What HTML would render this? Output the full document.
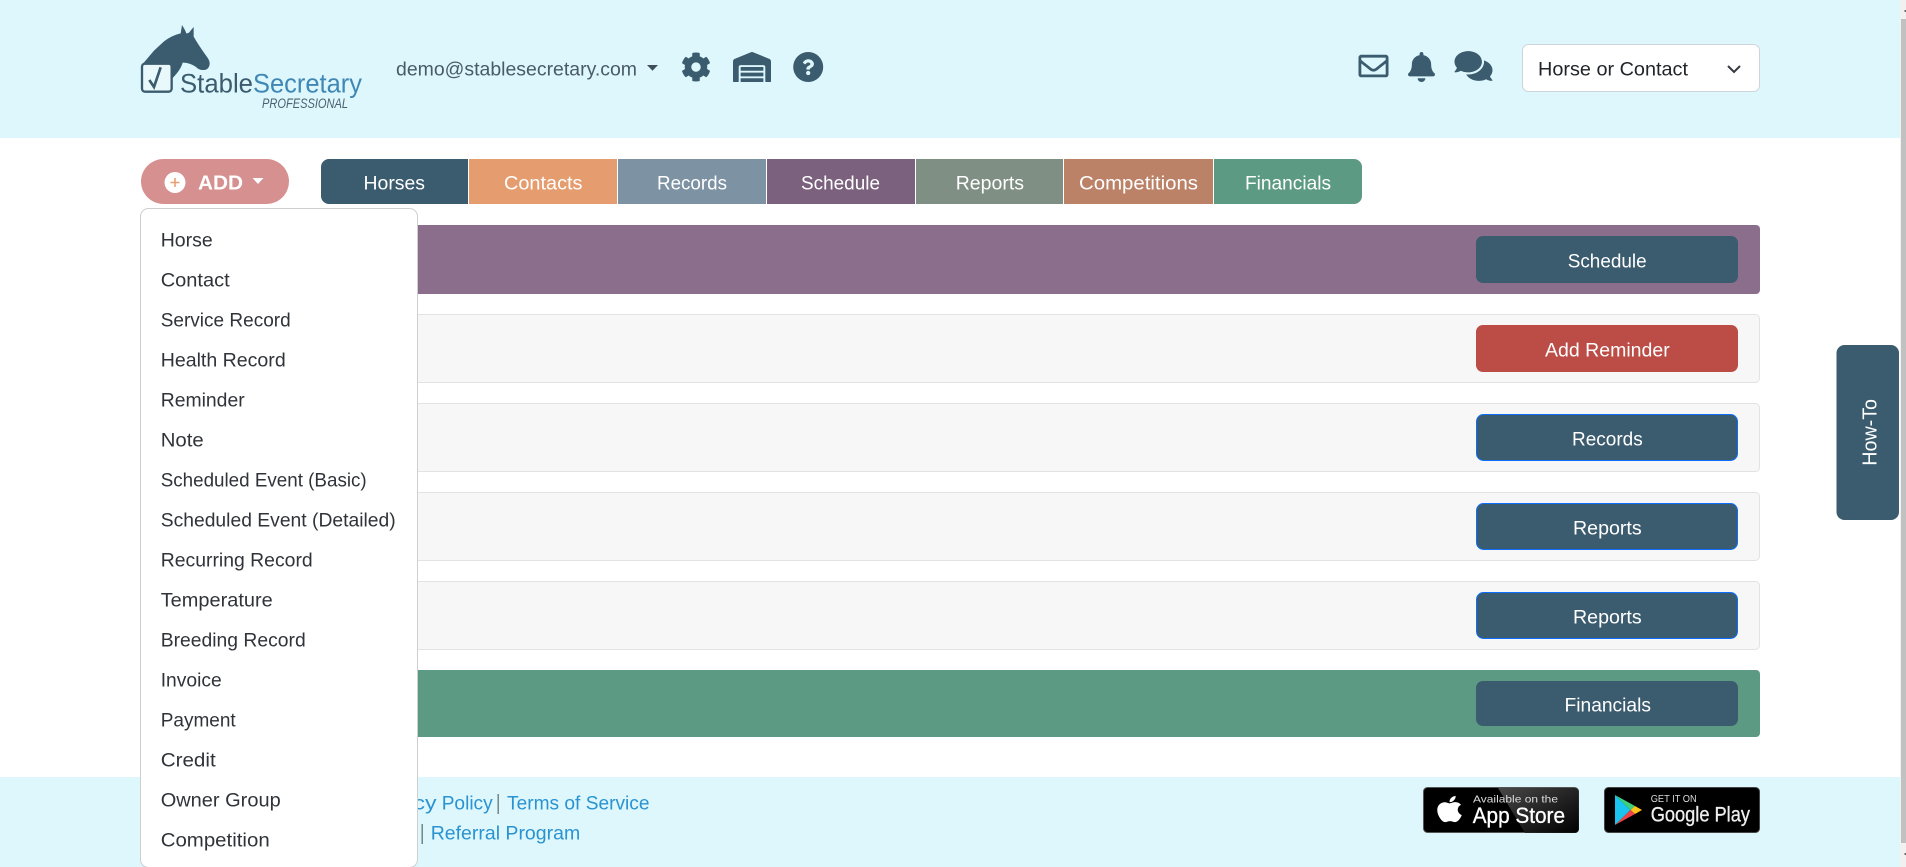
<!DOCTYPE html>
<html lang="en">
<head>
<meta charset="utf-8">
<title>Stable Secretary</title>
<style>
html,body{margin:0;padding:0;width:1906px;height:867px;overflow:hidden;background:#fff}
svg{display:block;position:absolute;left:0;top:0}
text{font-family:"Liberation Sans",sans-serif;white-space:pre}
.d text{font-size:19.5px;fill:#30343a}
.t text{font-size:19.5px;fill:#fff}
.b text{font-size:19.5px;fill:#fff}
.f text{font-size:19.5px;fill:#2a93d0}
</style>
</head>
<body>
<svg width="1906" height="867" viewBox="0 0 1906 867" xmlns="http://www.w3.org/2000/svg">
<defs>
<linearGradient id="sheen" x1="0" y1="0" x2="1" y2="1"><stop offset="0" stop-color="#555"/><stop offset="1" stop-color="#000"/></linearGradient>
</defs>
<!-- backgrounds -->
<rect x="0" y="0" width="1906" height="867" fill="#fff"/>
<rect x="0" y="0" width="1900" height="138" fill="#ddf7fc"/>
<rect x="0" y="777" width="1900" height="90" fill="#ddf7fc"/>

<!-- logo -->
<g transform="translate(130,20) scale(.3333)">
<path fill="#3b5b6e" d="M38 132L72 92L102 64C118 52 134 44 152 40L156 15C160 22 166 30 169 40C174 40 178 38 180 34L191 21L191 50C200 66 212 84 226 104C232 112 240 122 239 132C238 142 232 150 222 150C212 151 205 148 198 141C186 133 172 128 158 128C154 142 146 156 126 176L126 132Z"/>
<rect x="36" y="131" width="89" height="84" rx="9" fill="#e9f9fb" stroke="#3b5b6e" stroke-width="7"/>
<path d="M58 180L72 201L92 142" fill="none" stroke="#3b5b6e" stroke-width="8"/>
</g>
<text x="180" y="92.7" font-size="26.5" fill="#3b5b6e" textLength="73" lengthAdjust="spacingAndGlyphs">Stable</text>
<text x="253" y="92.7" font-size="26.5" fill="#3f88b5" textLength="109" lengthAdjust="spacingAndGlyphs">Secretary</text>
<text x="262" y="108" font-size="14" font-style="italic" fill="#4a6070" textLength="86" lengthAdjust="spacingAndGlyphs">PROFESSIONAL</text>

<!-- header left -->
<text x="396" y="75.7" font-size="19.5" fill="#4a5b66" textLength="241" lengthAdjust="spacingAndGlyphs">demo@stablesecretary.com</text>
<path d="M647 65H658L652.5 70.7Z" fill="#3f4f5a"/>
<svg x="681" y="52" width="30" height="30" viewBox="0 0 512 512"><path fill="#3b5b6e" d="M487.4 315.7l-42.6-24.6c4.3-23.2 4.3-47 0-70.2l42.6-24.6c4.9-2.8 7.1-8.6 5.5-14-11.1-35.6-30-67.8-54.7-94.6-3.8-4.1-10-5.1-14.8-2.3L380.8 110c-17.9-15.4-38.5-27.3-60.8-35.1V25.8c0-5.6-3.9-10.5-9.4-11.7-36.7-8.2-74.3-7.8-109.2 0-5.5 1.2-9.4 6.1-9.4 11.7V75c-22.2 7.9-42.8 19.8-60.8 35.1L88.7 85.5c-4.9-2.8-11-1.9-14.8 2.3-24.7 26.7-43.6 58.9-54.7 94.6-1.7 5.4.6 11.2 5.5 14L67.3 221c-4.3 23.2-4.3 47 0 70.2l-42.6 24.6c-4.9 2.8-7.1 8.6-5.5 14 11.1 35.6 30 67.8 54.7 94.6 3.8 4.1 10 5.1 14.8 2.3l42.6-24.6c17.9 15.4 38.5 27.3 60.8 35.1v49.2c0 5.6 3.9 10.5 9.4 11.7 36.7 8.2 74.3 7.8 109.2 0 5.5-1.2 9.4-6.1 9.4-11.7v-49.2c22.2-7.9 42.8-19.8 60.8-35.1l42.6 24.6c4.9 2.8 11 1.9 14.8-2.3 24.7-26.7 43.6-58.9 54.7-94.6 1.5-5.5-.7-11.3-5.6-14.1zM256 336c-44.1 0-80-35.9-80-80s35.9-80 80-80 80 35.9 80 80-35.9 80-80 80z"/></svg>
<svg x="733" y="52" width="38" height="30" viewBox="0 0 640 512" preserveAspectRatio="none"><path fill="#3b5b6e" d="M504 352H136.4c-4.4 0-8 3.6-8 8l-.1 48c0 4.4 3.6 8 8 8H504c4.4 0 8-3.6 8-8v-48c0-4.4-3.6-8-8-8zm0 96H136.1c-4.4 0-8 3.6-8 8l-.1 48c0 4.4 3.6 8 8 8h368c4.4 0 8-3.6 8-8v-48c0-4.4-3.6-8-8-8zm0-192H136.6c-4.4 0-8 3.6-8 8l-.1 48c0 4.4 3.6 8 8 8H504c4.4 0 8-3.6 8-8v-48c0-4.4-3.6-8-8-8zm106.5-139L338.4 3.7a48.15 48.15 0 0 0-36.9 0L29.5 117C11.7 124.5 0 141.9 0 161.3V504c0 4.4 3.6 8 8 8h80c4.4 0 8-3.6 8-8V256c0-17.6 14.6-32 32.6-32h382.8c18 0 32.6 14.4 32.6 32v248c0 4.4 3.6 8 8 8h80c4.4 0 8-3.6 8-8V161.3c0-19.4-11.7-36.8-29.5-44.3z"/></svg>
<circle cx="808.2" cy="67" r="15" fill="#3b5b6e"/>
<g transform="translate(808.2,67) scale(.0465) translate(-256,-256)"><path fill="#ddf7fc" d="M262.655 90c-54.497 0-89.255 22.957-116.549 63.758-3.536 5.286-2.353 12.415 2.715 16.258l34.699 26.31c5.205 3.947 12.621 3.008 16.665-2.122 17.864-22.658 30.113-35.797 57.303-35.797 20.429 0 45.698 13.148 45.698 32.958 0 14.976-12.363 22.667-32.534 33.976C247.128 238.528 216 254.941 216 296v4c0 6.627 5.373 12 12 12h56c6.627 0 12-5.373 12-12v-1.333c0-28.462 83.186-29.647 83.186-106.667 0-58.002-60.165-102-116.531-102zM256 338c-25.365 0-46 20.635-46 46 0 25.364 20.635 46 46 46s46-20.636 46-46c0-25.365-20.635-46-46-46z"/></g>

<!-- header right -->
<svg x="1358.5" y="51" width="30" height="30" viewBox="0 0 512 512"><path fill="#3b5b6e" d="M464 64H48C21.49 64 0 85.49 0 112v288c0 26.51 21.49 48 48 48h416c26.51 0 48-21.49 48-48V112c0-26.51-21.49-48-48-48zm0 48v40.805c-22.422 18.259-58.168 46.651-134.587 106.49-16.841 13.247-50.201 45.072-73.413 44.701-23.208.375-56.579-31.459-73.413-44.701C106.18 199.465 70.425 171.067 48 152.805V112h416zM48 400V214.398c22.914 18.251 55.409 43.862 104.938 82.646 21.857 17.205 60.134 55.186 103.062 54.955 42.717.231 80.509-37.199 103.053-54.947 49.528-38.783 82.032-64.401 104.947-82.653V400H48z"/></svg>
<svg x="1408" y="52" width="27" height="30" viewBox="0 0 448 512" preserveAspectRatio="none"><path fill="#3b5b6e" d="M224 512c35.32 0 63.97-28.65 63.97-64H160.03c0 35.35 28.65 64 63.97 64zm215.39-149.71c-19.32-20.76-55.47-51.99-55.47-154.29 0-77.7-54.48-139.9-127.94-155.16V32c0-17.67-14.32-32-31.98-32s-31.98 14.33-31.98 32v20.84C118.56 68.1 64.08 130.3 64.08 208c0 102.3-36.15 133.53-55.47 154.29-6 6.45-8.66 14.16-8.61 21.71.11 16.4 12.98 32 32.1 32h383.8c19.12 0 32-15.6 32.1-32 .05-7.55-2.61-15.27-8.61-21.71z"/></svg>
<svg x="1454.5" y="49" width="38" height="34" viewBox="0 0 576 512" preserveAspectRatio="none"><path fill="#3b5b6e" d="M416 192c0-88.4-93.1-160-208-160S0 103.6 0 192c0 34.3 14.1 65.9 38 92-13.4 30.2-35.5 54.2-35.8 54.5-2.2 2.3-2.8 5.7-1.5 8.7S4.8 352 8 352c36.6 0 66.9-12.3 88.7-25 32.2 15.7 70.3 25 111.3 25 114.9 0 208-71.6 208-160zm122 220c23.9-26 38-57.7 38-92 0-66.9-53.5-124.2-129.3-148.1.9 6.6 1.3 13.3 1.3 20.1 0 105.9-107.7 192-240 192-10.8 0-21.3-.8-31.7-1.9C207.8 439.6 281.8 480 368 480c41 0 79.1-9.2 111.3-25 21.8 12.7 52.1 25 88.7 25 3.2 0 6.1-1.9 7.3-4.8 1.3-2.9.7-6.3-1.5-8.7-.3-.3-22.4-24.2-35.8-54.5z"/></svg>
<rect x="1522.5" y="44.5" width="237" height="47" rx="6" fill="#fff" stroke="#ced4da"/>
<text x="1538" y="75.7" font-size="19.5" fill="#212529" textLength="150" lengthAdjust="spacingAndGlyphs">Horse or Contact</text>
<path d="M1728 66L1734 72L1740 66" fill="none" stroke="#343a40" stroke-width="2"/>

<!-- add button -->
<rect x="141" y="159" width="148" height="45" rx="22.5" fill="#d69090"/>
<circle cx="175" cy="182.5" r="10.5" fill="#fff"/>
<path d="M175 178v9M170.5 182.5h9" stroke="#e8a070" stroke-width="1.6" fill="none"/>
<text x="198" y="189.5" font-size="20.5" font-weight="bold" fill="#fff" textLength="45" lengthAdjust="spacingAndGlyphs">ADD</text>
<path d="M252.5 178H263.5L258 184Z" fill="#fff"/>

<!-- tabs -->
<path d="M329 159H468V204H329a8 8 0 0 1-8-8V167a8 8 0 0 1 8-8Z" fill="#3b5b6e"/>
<rect x="469" y="159" width="148" height="45" fill="#e59d6f"/>
<rect x="618" y="159" width="148" height="45" fill="#7d92a3"/>
<rect x="767" y="159" width="148" height="45" fill="#7b617d"/>
<rect x="916" y="159" width="147" height="45" fill="#7f8f83"/>
<rect x="1064" y="159" width="149" height="45" fill="#bb8268"/>
<path d="M1214 159H1354a8 8 0 0 1 8 8V196a8 8 0 0 1-8 8H1214Z" fill="#5d9a84"/>
<g class="t" transform="translate(0,-.5)">
<text x="363.5" y="190" textLength="61.5" lengthAdjust="spacingAndGlyphs">Horses</text>
<text x="504" y="190" textLength="78.5" lengthAdjust="spacingAndGlyphs">Contacts</text>
<text x="657" y="190" textLength="70" lengthAdjust="spacingAndGlyphs">Records</text>
<text x="801" y="190" textLength="79" lengthAdjust="spacingAndGlyphs">Schedule</text>
<text x="955.7" y="190" textLength="68.3" lengthAdjust="spacingAndGlyphs">Reports</text>
<text x="1079" y="190" textLength="119" lengthAdjust="spacingAndGlyphs">Competitions</text>
<text x="1245" y="190" textLength="86" lengthAdjust="spacingAndGlyphs">Financials</text>
</g>

<!-- panels -->
<rect x="140" y="225" width="1620" height="69" rx="4" fill="#8a6e8c"/>
<rect x="140.5" y="314.5" width="1619" height="68" rx="4" fill="#f7f7f7" stroke="#e3e3e3"/>
<rect x="140.5" y="403.5" width="1619" height="68" rx="4" fill="#f7f7f7" stroke="#e3e3e3"/>
<rect x="140.5" y="492.5" width="1619" height="68" rx="4" fill="#f7f7f7" stroke="#e3e3e3"/>
<rect x="140.5" y="581.5" width="1619" height="68" rx="4" fill="#f7f7f7" stroke="#e3e3e3"/>
<rect x="140" y="670" width="1620" height="67" rx="4" fill="#5d9a84"/>

<!-- panel buttons -->
<rect x="1476" y="236" width="262" height="47" rx="7" fill="#3b5b6e"/>
<rect x="1476" y="325" width="262" height="47" rx="7" fill="#bb4c46"/>
<rect x="1476.5" y="414.5" width="261" height="46" rx="7" fill="#3b5b6e" stroke="#0d6efd"/>
<rect x="1476.5" y="503.5" width="261" height="46" rx="7" fill="#3b5b6e" stroke="#0d6efd"/>
<rect x="1476.5" y="592.5" width="261" height="46" rx="7" fill="#3b5b6e" stroke="#0d6efd"/>
<rect x="1476" y="681" width="262" height="45" rx="7" fill="#3b5b6e"/>
<g class="b" transform="translate(0,-.5)">
<text x="1567.7" y="268" textLength="79" lengthAdjust="spacingAndGlyphs">Schedule</text>
<text x="1545" y="357" textLength="124.7" lengthAdjust="spacingAndGlyphs">Add Reminder</text>
<text x="1572" y="446" textLength="70.7" lengthAdjust="spacingAndGlyphs">Records</text>
<text x="1573" y="535" textLength="68.7" lengthAdjust="spacingAndGlyphs">Reports</text>
<text x="1573" y="624" textLength="68.7" lengthAdjust="spacingAndGlyphs">Reports</text>
<text x="1564.5" y="712" textLength="86.5" lengthAdjust="spacingAndGlyphs">Financials</text>
</g>

<!-- how-to -->
<rect x="1836.5" y="345" width="62.5" height="175" rx="8" fill="#3b5b6e"/>
<text transform="translate(1876.7,465.7) rotate(-90)" font-size="20" fill="#fff" textLength="66.7" lengthAdjust="spacingAndGlyphs">How-To</text>

<!-- footer -->
<g class="f" transform="translate(0,-.5)">
<text x="361" y="810" textLength="75.5" lengthAdjust="spacingAndGlyphs">Privacy</text>
<text x="441.7" y="810" textLength="51" lengthAdjust="spacingAndGlyphs">Policy</text>
<text x="507" y="810" textLength="142.5" lengthAdjust="spacingAndGlyphs">Terms of Service</text>
<text x="430.7" y="840" textLength="149.5" lengthAdjust="spacingAndGlyphs">Referral Program</text>
</g>
<rect x="497.5" y="794" width="1.4" height="20" fill="#6d7d80"/>
<rect x="421.5" y="824" width="1.4" height="20" fill="#6d7d80"/>

<!-- dropdown -->
<rect x="140.5" y="208.5" width="277" height="659" rx="8" fill="#fff" stroke="#cfcfcf"/>
<g class="d" transform="translate(-.3,-.5)">
<text x="161" y="247" textLength="52" lengthAdjust="spacingAndGlyphs">Horse</text>
<text x="161" y="287" textLength="69" lengthAdjust="spacingAndGlyphs">Contact</text>
<text x="161" y="327" textLength="130" lengthAdjust="spacingAndGlyphs">Service Record</text>
<text x="161" y="367" textLength="125" lengthAdjust="spacingAndGlyphs">Health Record</text>
<text x="161" y="407" textLength="84" lengthAdjust="spacingAndGlyphs">Reminder</text>
<text x="161" y="447" textLength="43" lengthAdjust="spacingAndGlyphs">Note</text>
<text x="161" y="487" textLength="206" lengthAdjust="spacingAndGlyphs">Scheduled Event (Basic)</text>
<text x="161" y="527" textLength="235" lengthAdjust="spacingAndGlyphs">Scheduled Event (Detailed)</text>
<text x="161" y="567" textLength="152" lengthAdjust="spacingAndGlyphs">Recurring Record</text>
<text x="161" y="607" textLength="112" lengthAdjust="spacingAndGlyphs">Temperature</text>
<text x="161" y="647" textLength="145" lengthAdjust="spacingAndGlyphs">Breeding Record</text>
<text x="161" y="687" textLength="61" lengthAdjust="spacingAndGlyphs">Invoice</text>
<text x="161" y="727" textLength="75" lengthAdjust="spacingAndGlyphs">Payment</text>
<text x="161" y="767" textLength="55" lengthAdjust="spacingAndGlyphs">Credit</text>
<text x="161" y="807" textLength="120" lengthAdjust="spacingAndGlyphs">Owner Group</text>
<text x="161" y="847" textLength="109" lengthAdjust="spacingAndGlyphs">Competition</text>
</g>

<!-- app store badge -->
<rect x="1423.5" y="787.5" width="155" height="45" rx="4" fill="#000" stroke="#555"/>
<path d="M1498 788H1575a4 4 0 0 1 4 4V829a4 4 0 0 1-4 4H1525Z" fill="url(#sheen)" opacity=".85"/>
<svg x="1437" y="794" width="25" height="30" viewBox="0 0 384 512" preserveAspectRatio="none"><path fill="#fff" d="M318.7 268.7c-.2-36.7 16.4-64.4 50-84.8-18.8-26.9-47.2-41.7-84.7-44.6-35.5-2.8-74.3 20.7-88.5 20.7-15 0-49.4-19.7-76.4-19.7C63.3 141.2 4 184.8 4 273.5q0 39.3 14.4 81.2c12.8 36.7 59 126.7 107.2 125.2 25.2-.6 43-17.9 75.8-17.9 31.8 0 48.3 17.9 76.4 17.9 48.6-.7 90.4-82.5 102.6-119.3-65.2-30.7-61.7-90-61.7-91.9zm-56.6-164.2c27.3-32.4 24.8-61.9 24-72.5-24.1 1.4-52 16.4-67.9 34.9-17.5 19.8-27.8 44.3-25.6 71.9 26.1 2 49.9-11.4 69.5-34.3z"/></svg>
<text x="1473" y="802.7" font-size="10.5" fill="#ddd" textLength="85" lengthAdjust="spacingAndGlyphs">Available on the</text>
<text x="1472.7" y="823" font-size="22" fill="#fff" stroke="#fff" stroke-width=".3" textLength="92.3" lengthAdjust="spacingAndGlyphs">App Store</text>

<!-- google play badge -->
<rect x="1604.5" y="787.5" width="155" height="45" rx="4" fill="#000" stroke="#444"/>
<path d="M1615 795L1630.5 810L1615 825Z" fill="#19c4ef"/>
<path d="M1615 795L1635 806L1630.5 810Z" fill="#3fd07c"/>
<path d="M1635 806L1642 810L1635 814L1630.5 810Z" fill="#fcc41a"/>
<path d="M1615 825L1630.5 810L1635 814Z" fill="#ee4447"/>
<text x="1650.7" y="802" font-size="10" fill="#ddd" textLength="46" lengthAdjust="spacingAndGlyphs">GET IT ON</text>
<text x="1650.7" y="821.7" font-size="21" fill="#eee" stroke="#eee" stroke-width=".3" textLength="99.3" lengthAdjust="spacingAndGlyphs">Google Play</text>

<!-- scrollbar -->
<rect x="1900" y="0" width="6" height="867" fill="#f1f1f1"/>
<rect x="1901" y="19" width="5" height="824" fill="#c1c1c1"/>
<rect x="1904.5" y="10" width="1.5" height="2" fill="#666"/>
<rect x="1904.5" y="853" width="1.5" height="2" fill="#666"/>
</svg>
</body>
</html>
